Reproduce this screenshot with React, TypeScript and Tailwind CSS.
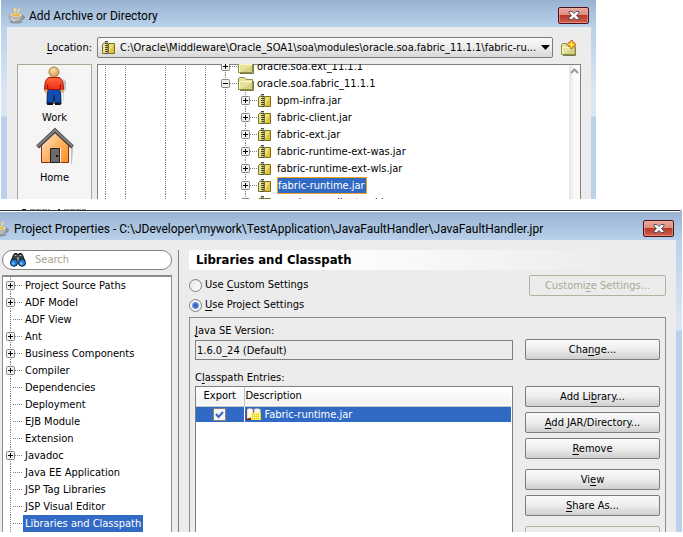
import React from 'react';

interface TreeRow {
  label: string;
  expandable?: boolean;
  selected?: boolean;
}

const archives: TreeRow[] = [
  { label: 'bpm-infra.jar' },
  { label: 'fabric-client.jar' },
  { label: 'fabric-ext.jar' },
  { label: 'fabric-runtime-ext-was.jar' },
  { label: 'fabric-runtime-ext-wls.jar' },
  { label: 'fabric-runtime.jar', selected: true },
  { label: 'oracle-soa-client-api.jar' },
];

const categories: TreeRow[] = [
  { label: 'Project Source Paths', expandable: true },
  { label: 'ADF Model', expandable: true },
  { label: 'ADF View' },
  { label: 'Ant', expandable: true },
  { label: 'Business Components', expandable: true },
  { label: 'Compiler', expandable: true },
  { label: 'Dependencies' },
  { label: 'Deployment' },
  { label: 'EJB Module' },
  { label: 'Extension' },
  { label: 'Javadoc', expandable: true },
  { label: 'Java EE Application' },
  { label: 'JSP Tag Libraries' },
  { label: 'JSP Visual Editor' },
  { label: 'Libraries and Classpath', selected: true },
];

const CupIcon = () => (
  <svg width="16" height="16" viewBox="0 0 16 16" className="shrink-0" aria-hidden="true">
    <path d="M5.500 0c2 1-1 2.500 1 5M9 1c2 1-1 2 1 4" fill="none" stroke="#f6d683" strokeWidth="2" />
    <ellipse cx="7" cy="14" rx="6.500" ry="1.600" fill="#6f7d8c" opacity=".6" />
    <path d="M0 7h13.500c0 4-2.500 7-6.500 7S0 11 0 7z" fill="#b9b9b3" stroke="#7b7b75" strokeWidth=".7" />
    <path d="M13 8c3-.5 3 3-1 3.500" fill="none" stroke="#85857f" strokeWidth="1.300" />
    <ellipse cx="6.800" cy="7" rx="6.300" ry="2.200" fill="#f1efe6" stroke="#94948e" strokeWidth=".6" />
    <ellipse cx="6.800" cy="7" rx="4.500" ry="1.300" fill="#e9b93f" />
    <path d="M2 10c1 2 2 3 4 3" fill="none" stroke="#f4f4f1" />
  </svg>
);

const ArchiveIcon = () => (
  <svg width="14" height="14" viewBox="0 0 14 14" className="shrink-0" aria-hidden="true">
    <path d="M.5 3.500L2 2h4v10.500H.5z" fill="#ece58a" stroke="#77741a" />
    <path d="M6.500 2.500h6v10h-6z" fill="#e2bf3c" stroke="#77741a" />
    <path d="M7 12V3h5z" fill="#f2dc74" />
    <path d="M4.500 0v13" stroke="#4a4a4a" strokeWidth="3" strokeDasharray="1 1" />
    <path d="M4.500 1v12" stroke="#b5b5b5" strokeWidth="1" strokeDasharray="1 1" />
  </svg>
);

const FolderIcon = () => (
  <svg width="16" height="14" viewBox="0 0 16 14" className="shrink-0" aria-hidden="true">
    <path d="M2 13.500h13.500V4" fill="none" stroke="#77774f" />
    <path d="M.5 12.500v-11l1-1h5l1.500 2h6.500v10z" fill="#e5e29a" stroke="#8f8d3e" />
    <path d="M1.500 4.500h12" stroke="#faf8d0" />
    <path d="M1.500 12V5" stroke="#faf8d0" />
    <path d="M3 12l11-6v6z" fill="#cfcb74" opacity=".7" />
  </svg>
);

const NewFolderIcon = () => (
  <svg width="16" height="16" viewBox="0 0 16 16" aria-hidden="true">
    <path d="M2 15.500h12.500V7" fill="none" stroke="#77774f" />
    <path d="M.5 14.500v-10l1-1h4l1.500 2h7v9z" fill="#e5e29a" stroke="#8f8d3e" />
    <path d="M1.500 7.500h11M1.500 14V8" stroke="#faf8d0" fill="none" />
    <path d="M3 14l10.500-6v6z" fill="#cfcb74" opacity=".7" />
    <path d="M10.500 0L15 4.500 10.500 9 6 4.500z" fill="#e7a31c" stroke="#a3321a" strokeDasharray="2 1" />
    <path d="M10.500 1l1 2.500 2.500 1-2.500 1-1 2.500-1-2.500-2.500-1 2.500-1z" fill="#fff04a" />
  </svg>
);

const PersonIcon = () => (
  <svg width="24" height="40" viewBox="0 0 24 40" aria-hidden="true">
    <defs>
      <linearGradient id="shirt" x1="0" y1="0" x2="0" y2="1">
        <stop offset="0" stopColor="#ff6a3c" />
        <stop offset="1" stopColor="#f02a13" />
      </linearGradient>
      <radialGradient id="skin" cx=".4" cy=".3" r=".8">
        <stop offset="0" stopColor="#fbe3a6" />
        <stop offset="1" stopColor="#cf9146" />
      </radialGradient>
    </defs>
    <path d="M6 38.500h14l1-14h2l0-9-3-3v26z" fill="#777" opacity=".4" />
    <path d="M4.500 22h13l.500 16h-6l-1-9-1 9h-6z" fill="#0f4db0" stroke="#0a1f52" />
    <path d="M4.500 36.500h5.500v2.500H4zM12 36.500h5.500v2.500h-5.500z" fill="#11141f" />
    <path d="M6 11.500h10c3.500 1 4.500 7 4.500 12h-3v-5l-.5 5h-12l-.5-5v5h-3c0-5 1-11 4.500-12z" fill="url(#shirt)" stroke="#a31208" />
    <circle cx="3" cy="25" r="1.800" fill="#e2a860" />
    <circle cx="19" cy="25" r="1.800" fill="#e2a860" />
    <circle cx="11" cy="6" r="5" fill="url(#skin)" stroke="#9a6a2e" strokeWidth=".8" />
  </svg>
);

const HomeIcon = () => (
  <svg width="38" height="38" viewBox="0 0 38 38" aria-hidden="true">
    <defs>
      <linearGradient id="wall" x1="0" y1="0" x2="1" y2="1">
        <stop offset="0" stopColor="#fff0dc" />
        <stop offset=".5" stopColor="#ffb566" />
        <stop offset="1" stopColor="#ff8f24" />
      </linearGradient>
    </defs>
    <path d="M7 37h28V19l2 1v2l-1 15z" fill="#777" opacity=".4" />
    <path d="M5.500 17L19 4.500 32.500 17v18.500h-27z" fill="url(#wall)" stroke="#8e2b0d" />
    <path d="M1.500 20L19 3.500 36.500 20" fill="none" stroke="#3f3f3f" strokeWidth="4" />
    <path d="M1.500 19.500L19 3.300 36.500 19.500" fill="none" stroke="#808080" strokeWidth="2.200" />
    <path d="M14.500 35.500v-14h9v14z" fill="#6b6b6b" stroke="#202020" />
    <path d="M24.500 21v14.500" stroke="#fff3d8" />
    <rect x="20" y="28" width="2" height="2" fill="#111" />
  </svg>
);

const BinocularsIcon = () => (
  <svg width="16" height="14" viewBox="0 0 16 14" className="shrink-0" aria-hidden="true">
    <path d="M1.500 7l2-5 1-1.500h2.500L8 2l1-1.500h2.500l1 1.500 2 5z" fill="#3d4248" stroke="#16181b" />
    <path d="M7 4h2v4H7z" fill="#8b929a" />
    <path d="M4.500 2.500h2M9.500 2.500h2" stroke="#a7adb3" />
    <circle cx="4" cy="9.700" r="3.600" fill="#1e7fe0" stroke="#14202f" />
    <circle cx="12" cy="9.700" r="3.600" fill="#1e7fe0" stroke="#14202f" />
    <circle cx="3.300" cy="10.500" r="1.200" fill="#7fc4ff" />
    <circle cx="11.300" cy="10.500" r="1.200" fill="#7fc4ff" />
  </svg>
);

const LibraryIcon = () => (
  <svg width="16" height="13" viewBox="0 0 16 13" className="shrink-0" aria-hidden="true">
    <path d="M0 2h7l1 1 1-1h6v10H0z" fill="#7b1512" />
    <path d="M1 1.500C3 0 5 0 7 1.500v9c-2-1-4-1-5 0H1z" fill="#fff" stroke="#b9a7a2" strokeWidth=".6" />
    <path d="M8 1.500c2-1.500 4-1.500 6.500 0V10H8z" fill="#f7f3e6" stroke="#b9a7a2" strokeWidth=".6" />
    <path d="M5 5h10v7H5z" fill="#f4ec3e" />
    <path d="M5 5.500h10M5 7.500h10M5 9.500h10" stroke="#fff9a0" strokeDasharray="1 1" />
    <path d="M6 6.500h9M6 8.500h9M6 10.500h9" stroke="#d9cf3c" strokeDasharray="1 1" />
  </svg>
);

const CloseButton = () => (
  <button
    type="button"
    aria-label="Close"
    className="flex h-[17px] w-[31px] items-center justify-center rounded-[2px] border border-[#4b1119] bg-[linear-gradient(#eba89c_0%,#dd8a7c_48%,#b8392a_50%,#d2604c_100%)] shadow-[inset_0_0_0_1px_#f0b8ae80]"
  >
    <svg width="12" height="9" viewBox="0 0 12 9" aria-hidden="true">
      <path d="M1 .5h3l2 2 2-2h3v1.500L8.500 4.500l2.500 2.500v1.500H8l-2-2-2 2H1V7l2.500-2.500L1 2z" fill="#fafafa" stroke="#4d5463" />
    </svg>
  </button>
);

const TitleBar = ({ title }: { title: string }) => (
  <>
    <CupIcon />
    <h1 className="min-w-0 flex-1 truncate font-['Roboto','Open_Sans',sans-serif] text-[12px] leading-4 text-black">
      {title}
    </h1>
    <CloseButton />
  </>
);

const Expander = ({ open = false }: { open?: boolean }) => (
  <svg width="9" height="9" viewBox="0 0 9 9" className="shrink-0" aria-hidden="true">
    <rect x=".5" y=".5" width="8" height="8" rx="1" fill="#f1f1f1" stroke="#858585" />
    <path d={open ? 'M2 4.500h5' : 'M2 4.500h5M4.500 2v5'} stroke="#000" fill="none" />
  </svg>
);

const HorizontalDots = () => (
  <span className="mr-px h-px w-[7px] shrink-0 bg-[repeating-linear-gradient(to_right,#808080_0_1px,transparent_1px_2px)]" />
);

const VerticalDots = () => (
  <span className="w-px shrink-0 self-stretch bg-[repeating-linear-gradient(#808080_0_1px,transparent_1px_2px)]" />
);

// Ancestor levels to the left of a tree node; the third one has no more siblings
const Guides = () => (
  <>
    {[true, true, false, true, true, true].map((visible, index) => (
      <span key={index} className="flex w-5 shrink-0 self-stretch">
        {visible && <VerticalDots />}
      </span>
    ))}
  </>
);

const FolderNode = ({ label, open = false }: { label: string; open?: boolean }) => (
  <li className="flex h-[17px] items-center whitespace-nowrap">
    <Guides />
    <VerticalDots />
    <span className="-ml-[5px] flex items-center">
      <Expander open={open} />
      <HorizontalDots />
      <FolderIcon />
    </span>
    <span className="ml-[3px]">{label}</span>
  </li>
);

const U = ({ children }: { children: React.ReactNode }) => (
  <span className="underline decoration-1 underline-offset-2">{children}</span>
);

const PushButton = ({ children, disabled = false }: { children: React.ReactNode; disabled?: boolean }) => (
  <button
    type="button"
    disabled={disabled}
    className="h-[21px] w-full shrink-0 rounded-[2px] border border-[#7d7d7d] bg-[linear-gradient(#fafafa,#ededed_50%,#cfcfcf)] text-center leading-4 whitespace-nowrap text-black disabled:border-[#b2b29e] disabled:bg-none disabled:text-[#aaaa97]"
  >
    {children}
  </button>
);

const radioClass =
  'size-[13px] appearance-none rounded-full border border-[#808080] bg-[linear-gradient(135deg,#e6e6e6,#fff)] checked:bg-[radial-gradient(circle,#2c62c0_0_1px,#6f97dc_3px,#f4f4f4_4px)]';

const ArchiveDialog = () => (
  <section className="mr-[87px] ml-px bg-[linear-gradient(#98b3d2,#b9d1ea_27px,#d9e6f4_90px,#d9e6f4_116px,#b9d1ea_117px)] pr-[5px] pl-[6px]">
    <header className="flex h-[27px] items-center gap-1 pt-1 pr-[2px] pl-[2px]">
      <TitleBar title="Add Archive or Directory" />
    </header>
    <div className="bg-[#ececec] px-[10px] pt-[10px]">
      <div className="flex items-center pr-1">
        <label htmlFor="location" className="w-20 shrink-0 pr-[5px] text-right">
          <U>L</U>ocation:
        </label>
        <div className="flex h-[21px] min-w-0 flex-1 items-center rounded-[2px] border border-[#7d7d7d] bg-[linear-gradient(#fafafa,#ececec_50%,#d8d8d8)] pr-[2px] pl-1">
          <ArchiveIcon />
          <select id="location" className="ml-1 min-w-0 flex-1 appearance-none leading-4">
            <option>C:\Oracle\Middleware\Oracle_SOA1\soa\modules\oracle.soa.fabric_11.1.1\fabric-ru...</option>
          </select>
          <svg width="9" height="5" viewBox="0 0 9 5" className="shrink-0" aria-hidden="true">
            <path d="M0 0h9L4.500 5z" fill="#000" />
          </svg>
        </div>
        <button type="button" aria-label="New folder" className="ml-2">
          <NewFolderIcon />
        </button>
      </div>
      <div className="mt-[6px] flex h-[135px] gap-[5px] overflow-hidden">
        <nav className="flex w-[75px] shrink-0 flex-col items-center border border-b-0 border-[#a9a996] bg-[#f5f5f5] pt-px">
          <a href="#work" className="flex flex-col items-center gap-1">
            <PersonIcon />
            Work
          </a>
          <a href="#home" className="mt-px flex flex-col items-center gap-[5px]">
            <HomeIcon />
            Home
          </a>
        </nav>
        <div className="flex min-w-0 flex-1 border border-b-0 border-[#808080] bg-white">
          <ul className="-mt-[7px] min-w-0 flex-1 pl-[7px]">
            <FolderNode label="oracle.soa.ext_11.1.1" />
            <FolderNode label="oracle.soa.fabric_11.1.1" open />
            {archives.map((row) => (
              <li key={row.label} className="flex h-[17px] items-center whitespace-nowrap">
                <Guides />
                <span className="flex w-5 shrink-0 self-stretch">
                  <VerticalDots />
                </span>
                <VerticalDots />
                <span className="-ml-[5px] flex items-center">
                  <Expander />
                  <HorizontalDots />
                  <ArchiveIcon />
                </span>
                <span
                  className={
                    row.selected
                      ? 'ml-[5px] border border-[#f0a020] bg-[#316ac5] pr-px leading-[15px] text-white'
                      : 'ml-[5px]'
                  }
                >
                  {row.label}
                </span>
              </li>
            ))}
          </ul>
          <div className="flex w-[11px] justify-center bg-[linear-gradient(to_right,#e4e4e4,#fafafa_50%)] pt-[3px]">
            <svg width="9" height="6" viewBox="0 0 9 6" aria-hidden="true">
              <path d="M1 5l3.500-3.500L8 5" fill="none" stroke="#9a9a9a" strokeWidth="2" />
            </svg>
          </div>
        </div>
      </div>
    </div>
  </section>
);

const CategoryPanel = () => (
  <aside className="flex w-[170px] shrink-0 flex-col">
    <label className="flex h-5 items-center gap-[9px] rounded-full border border-[#808080] bg-white pl-[7px]">
      <BinocularsIcon />
      <input
        type="text"
        aria-label="Search"
        placeholder="Search"
        className="min-w-0 flex-1 outline-none placeholder:text-[#a3a38e]"
      />
    </label>
    <ul className="mt-[5px] min-h-0 flex-1 overflow-hidden border border-t-2 border-b-0 border-[#8c8c8c] bg-white pl-[3px]">
      {categories.map((row) => (
        <li key={row.label} className="flex h-[17px] items-center whitespace-nowrap">
          <span className="flex w-1 shrink-0" />
          <VerticalDots />
          {row.expandable ? (
            <span className="-ml-[5px] flex items-center">
              <Expander />
              <HorizontalDots />
            </span>
          ) : (
            <span className="mr-px ml-px h-px w-[10px] shrink-0 bg-[repeating-linear-gradient(to_right,transparent_0_1px,#808080_1px_2px)]" />
          )}
          <span className={row.selected ? 'bg-[#316ac5] px-[2px] leading-[17px] text-white' : 'ml-[2px]'}>
            {row.label}
          </span>
        </li>
      ))}
    </ul>
  </aside>
);

const ClasspathTable = () => (
  <div className="min-h-0 flex-1 border border-b-0 border-[#808080] bg-white pr-px">
    <table className="w-full border-collapse" aria-labelledby="entries-label">
      <thead>
        <tr className="h-[19px] border-b border-[#c4c4c4] bg-[linear-gradient(#fff,#f3f3f3)]">
          <th className="w-12 border-r border-[#c4c4c4] p-0 text-center font-normal">Export</th>
          <th className="p-0 pl-px text-left font-normal">Description</th>
        </tr>
      </thead>
      <tbody>
        <tr className="h-[15px] bg-[#316ac5] text-white">
          <td className="border-r border-white p-0">
            <span className="relative mx-auto block size-[13px]">
              <input
                type="checkbox"
                aria-label="Export Fabric-runtime.jar"
                defaultChecked
                className="block size-[13px] appearance-none border border-[#808080] bg-[#f6f6f6]"
              />
              <svg width="13" height="13" viewBox="0 0 13 13" className="pointer-events-none absolute inset-0" aria-hidden="true">
                <path d="M3 6l2.500 3L10 4" fill="none" stroke="#316ac5" strokeWidth="2" />
              </svg>
            </span>
          </td>
          <td className="p-0 pl-px">
            <span className="flex items-center gap-[3px] leading-[15px]">
              <LibraryIcon />
              Fabric-runtime.jar
            </span>
          </td>
        </tr>
      </tbody>
    </table>
  </div>
);

const PropertiesDialog = () => (
  <section className="mr-px flex min-h-0 flex-1 flex-col overflow-hidden rounded-tr-[3px] border-t border-[#2d2d33] bg-[linear-gradient(#98b3d2,#b9d1ea_29px,#d9e6f4_110px,#d9e6f4_119px,#b9d1ea_120px)]">
    <header className="-ml-[7px] flex h-[29px] shrink-0 items-center gap-[5px] border-t border-white pt-[6px] pr-2 pb-px">
      <TitleBar title="Project Properties - C:\JDeveloper\mywork\TestApplication\JavaFaultHandler\JavaFaultHandler.jpr" />
    </header>
    <div className="mr-[6px] flex min-h-0 flex-1 bg-[#ececec] pt-[10px] pl-[2px]">
      <CategoryPanel />
      <div className="ml-[6px] w-px shrink-0 bg-[#808080]" />
      <main className="ml-[10px] flex min-w-0 flex-1 flex-col pr-[10px]">
        <h2 className="h-5 shrink-0 bg-[linear-gradient(to_right,#fff_25%,#ececec_90%)] pl-[7px] text-[13px] leading-5 font-bold text-black">
          Libraries and Classpath
        </h2>
        <div className="mt-[5px] flex shrink-0 items-start justify-between">
          <div className="flex flex-col">
            <label className="flex h-5 items-center gap-[3px]">
              <input type="radio" name="settings" className={radioClass} />
              <span>
                Use <U>C</U>ustom Settings
              </span>
            </label>
            <label className="flex h-5 items-center gap-[3px]">
              <input type="radio" name="settings" defaultChecked className={radioClass} />
              <span>
                <U>U</U>se Project Settings
              </span>
            </label>
          </div>
          <div className="w-[137px]">
            <PushButton disabled>
              Customi<U>z</U>e Settings...
            </PushButton>
          </div>
        </div>
        <div className="mt-[2px] flex min-h-0 flex-1 gap-3 border border-b-0 border-[#8c8c8c] pt-[5px] pr-[5px] pl-[5px]">
          <div className="flex min-w-0 flex-1 flex-col">
            <label htmlFor="java-version" className="h-[17px] shrink-0 leading-4">
              <U>J</U>ava SE Version:
            </label>
            <input
              id="java-version"
              type="text"
              readOnly
              value="1.6.0_24 (Default)"
              className="h-5 shrink-0 border border-[#808080] px-px"
            />
            <span id="entries-label" className="mt-[10px] h-4 shrink-0 leading-4">
              C<U>l</U>asspath Entries:
            </span>
            <ClasspathTable />
          </div>
          <div className="flex w-[135px] shrink-0 flex-col overflow-hidden pt-4">
            <PushButton>
              Cha<U>n</U>ge...
            </PushButton>
            <div className="mt-[26px] flex flex-col gap-[5px]">
              <PushButton>
                Add Li<U>b</U>rary...
              </PushButton>
              <PushButton>
                <U>A</U>dd JAR/Directory...
              </PushButton>
              <PushButton>
                <U>R</U>emove
              </PushButton>
            </div>
            <div className="mt-[10px] flex flex-col gap-[5px]">
              <PushButton>
                Vi<U>e</U>w
              </PushButton>
              <PushButton>
                <U>S</U>hare As...
              </PushButton>
            </div>
            <div className="mt-[10px]">
              <PushButton disabled>{null}</PushButton>
            </div>
          </div>
        </div>
      </main>
    </div>
  </section>
);

const App: React.FC = () => {
  return (
    <div className="flex h-screen flex-col overflow-hidden bg-white pb-[5px] font-['DejaVu_Sans_Condensed','Roboto',sans-serif] text-[11px] leading-4 text-black">
      <ArchiveDialog />
      {/* Top edge of the text line hidden behind the lower window */}
      <svg width="90" height="11" viewBox="0 0 90 11" className="shrink-0" aria-hidden="true">
        <path d="M22 10.500h4M58 10.500h2" stroke="#222" />
        <path d="M30 10.500h20M64 10.500h22" stroke="#999" strokeDasharray="5 1" />
      </svg>
      <PropertiesDialog />
    </div>
  );
};

export default App;
